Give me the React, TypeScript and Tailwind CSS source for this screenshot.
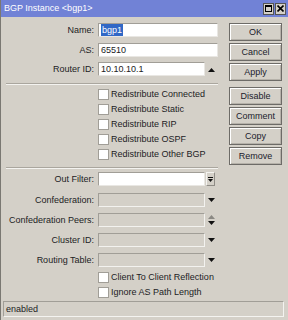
import React from "react";

const Up = () => (
  <svg width="7" height="4" viewBox="0 0 7 4" className="block">
    <polygon points="0,4 7,4 3.5,0" fill="#111" />
  </svg>
);
const Down = () => (
  <svg width="7" height="4" viewBox="0 0 7 4" className="block">
    <polygon points="0,0 7,0 3.5,4" fill="#111" />
  </svg>
);
const UpDown = () => (
  <svg width="7" height="10" viewBox="0 0 7 10" className="block">
    <polygon points="0,4 7,4 3.5,0" fill="#8a8883" />
    <polygon points="0,6 7,6 3.5,10" fill="#111" />
  </svg>
);

function Label({ text }: { text: string }) {
  return <div className="w-[93px] shrink-0 text-right leading-none whitespace-nowrap">{text}</div>;
}

function WhiteInput({ w, children }: { w: string; children?: React.ReactNode }) {
  return (
    <div className={`${w} h-[14px] bg-white border border-[#a19e97] border-b-[#e9e7e3] border-r-[#e9e7e3] flex items-center pl-[2px] leading-none`}>
      {children}
    </div>
  );
}

function DisInput() {
  return <div className="w-[107px] h-[14px] border border-[#a19e97] border-b-[#f3f2ef] border-r-[#f3f2ef]" />;
}

function Check({ text }: { text: string }) {
  return (
    <div className="flex items-center h-[11px] ml-[97px]">
      <div className="w-[11px] h-[11px] bg-white border border-[#a19e97] shrink-0" />
      <div className="ml-[2px] leading-none whitespace-nowrap">{text}</div>
    </div>
  );
}

function Btn({ text, cls = "" }: { text: string; cls?: string }) {
  return (
    <div className={`w-[53px] h-[18px] border border-[#6d6b67] shadow-[inset_1px_1px_0_#ffffff,inset_-1px_-1px_0_#b5b1a9] flex items-center justify-center leading-none text-[#20202c] ${cls}`}>
      {text}
    </div>
  );
}

export default function App() {
  return (
    <div className="w-[288px] h-[320px] bg-[#d4d0c8] border-l border-[#7a7872] flex flex-col overflow-hidden text-[9px] text-[#1c1c24] font-['Liberation_Sans',Arial,sans-serif]">
      {/* title bar */}
      <div className="h-[17px] bg-[#7182d6] flex items-center text-white shrink-0">
        <div className="ml-[3px] leading-none">BGP Instance &lt;bgp1&gt;</div>
        <div className="ml-auto mr-[2px] flex gap-[1px]">
          <div className="w-[11px] h-[12px] bg-[#d4d0c8] border border-[#555] flex items-center justify-center">
            <div className="w-[7px] h-[7px] border border-black border-t-2" />
          </div>
          <div className="w-[11px] h-[12px] bg-[#d4d0c8] border border-[#555] flex items-center justify-center">
            <svg width="7" height="7" viewBox="0 0 7 7">
              <path d="M0.5 0.5 L6.5 6.5 M6.5 0.5 L0.5 6.5" stroke="#000" strokeWidth="1.6" />
            </svg>
          </div>
        </div>
      </div>

      <div className="flex items-start">
        {/* left column */}
        <div className="w-[228px] shrink-0 flex flex-col">
          <div className="flex items-center h-[14px] mt-[6px]">
            <Label text="Name:" />
            <div className="ml-[4px]">
              <WhiteInput w="w-[120px]">
                <span className="bg-[#3168c6] text-white h-[12px] flex items-center px-[1px]">bgp1</span>
              </WhiteInput>
            </div>
          </div>
          <div className="flex items-center h-[14px] mt-[6px]">
            <Label text="AS:" />
            <div className="ml-[4px]">
              <WhiteInput w="w-[120px]">65510</WhiteInput>
            </div>
          </div>
          <div className="flex items-center h-[14px] mt-[5px]">
            <Label text="Router ID:" />
            <div className="ml-[4px]">
              <WhiteInput w="w-[107px]">10.10.10.1</WhiteInput>
            </div>
            <div className="ml-[3px] mt-[1px]"><Up /></div>
          </div>

          <div className="ml-[5px] w-[212px] mt-[7px] h-px bg-[#aaa69e]" />
          <div className="ml-[5px] w-[212px] h-px bg-[#f4f3f0]" />

          <div className="mt-[4px] flex flex-col gap-[4px]">
            <Check text="Redistribute Connected" />
            <Check text="Redistribute Static" />
            <Check text="Redistribute RIP" />
            <Check text="Redistribute OSPF" />
            <Check text="Redistribute Other BGP" />
          </div>

          <div className="ml-[5px] w-[212px] mt-[7px] h-px bg-[#aaa69e]" />
          <div className="ml-[5px] w-[212px] h-px bg-[#f4f3f0]" />

          <div className="flex items-center h-[14px] mt-[3px]">
            <Label text="Out Filter:" />
            <div className="ml-[4px]">
              <WhiteInput w="w-[107px]" />
            </div>
            <div className="ml-[1px] w-[9px] h-[14px] border border-[#8f8c86] border-t-[#f4f3f0] border-l-[#f4f3f0] flex flex-col items-center justify-center">
              <div className="w-[5px] h-px bg-[#111] mb-[1px]" />
              <svg width="5" height="3" viewBox="0 0 5 3" className="block">
                <polygon points="0,0 5,0 2.5,3" fill="#111" />
              </svg>
            </div>
          </div>

          <div className="flex items-center h-[14px] mt-[7px]">
            <Label text="Confederation:" />
            <div className="ml-[4px]"><DisInput /></div>
            <div className="ml-[3px]"><Down /></div>
          </div>
          <div className="flex items-center h-[14px] mt-[6px]">
            <Label text="Confederation Peers:" />
            <div className="ml-[4px]"><DisInput /></div>
            <div className="ml-[3px]"><UpDown /></div>
          </div>
          <div className="flex items-center h-[14px] mt-[6px]">
            <Label text="Cluster ID:" />
            <div className="ml-[4px]"><DisInput /></div>
            <div className="ml-[3px]"><Down /></div>
          </div>
          <div className="flex items-center h-[14px] mt-[6px]">
            <Label text="Routing Table:" />
            <div className="ml-[4px]"><DisInput /></div>
            <div className="ml-[3px]"><Down /></div>
          </div>

          <div className="mt-[5px] flex flex-col gap-[4px]">
            <Check text="Client To Client Reflection" />
            <Check text="Ignore AS Path Length" />
          </div>
        </div>

        {/* right column */}
        <div className="flex flex-col mt-[6px] gap-[2px]">
          <Btn text="OK" />
          <Btn text="Cancel" />
          <Btn text="Apply" />
          <Btn text="Disable" cls="mt-[4px]" />
          <Btn text="Comment" />
          <Btn text="Copy" />
          <Btn text="Remove" />
        </div>
      </div>

      <div className="mt-[3px] ml-[2px] w-[281px] h-[16px] border border-[#a19e97] border-b-[#f4f3f0] border-r-[#f4f3f0] flex items-center pl-[2px] leading-none">
        enabled
      </div>
    </div>
  );
}
